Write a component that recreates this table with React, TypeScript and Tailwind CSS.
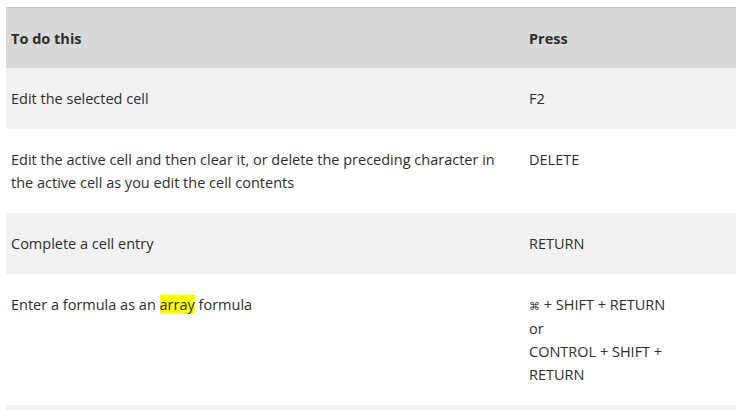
const rows: { action: React.ReactNode; keys: React.ReactNode }[] = [
  { action: 'Edit the selected cell', keys: 'F2' },
  {
    action: (
      <>
        Edit the active cell and then clear it, or delete the preceding character in
        <br />
        the active cell as you edit the cell contents
      </>
    ),
    keys: 'DELETE',
  },
  { action: 'Complete a cell entry', keys: 'RETURN' },
  {
    action: (
      <>
        Enter a formula as an <span className="bg-[#ffff00]">array</span> formula
      </>
    ),
    keys: (
      <>
        <span className="text-[11px] text-[#444]">⌘</span> + SHIFT + RETURN
        <br />
        or
        <br />
        CONTROL + SHIFT + RETURN
      </>
    ),
  },
  { action: '', keys: '' },
];

export default function App() {
  return (
    <div className="h-[410px] w-[740px] overflow-hidden bg-white pt-[7px] pl-[6px] font-['Open_Sans',sans-serif] text-[14.5px] leading-[23px] text-[#2e2e2e]">
      <div className="w-[730px] border-t border-[#cccccc]">
        <div className="grid h-[60px] grid-cols-[518px_1fr] items-center bg-[#d9d9d9] font-bold">
          <div className="pl-[5px]">To do this</div>
          <div className="pl-[5px]">Press</div>
        </div>
        {rows.map((row, i) => (
          <div key={i} className={`grid grid-cols-[518px_1fr] ${i % 2 === 0 ? 'bg-[#f2f2f2]' : 'bg-white'}`}>
            <div className="py-[19px] pl-[5px]">{row.action}</div>
            <div className="w-[150px] py-[19px] pl-[5px]">{row.keys}</div>
          </div>
        ))}
      </div>
    </div>
  );
}
